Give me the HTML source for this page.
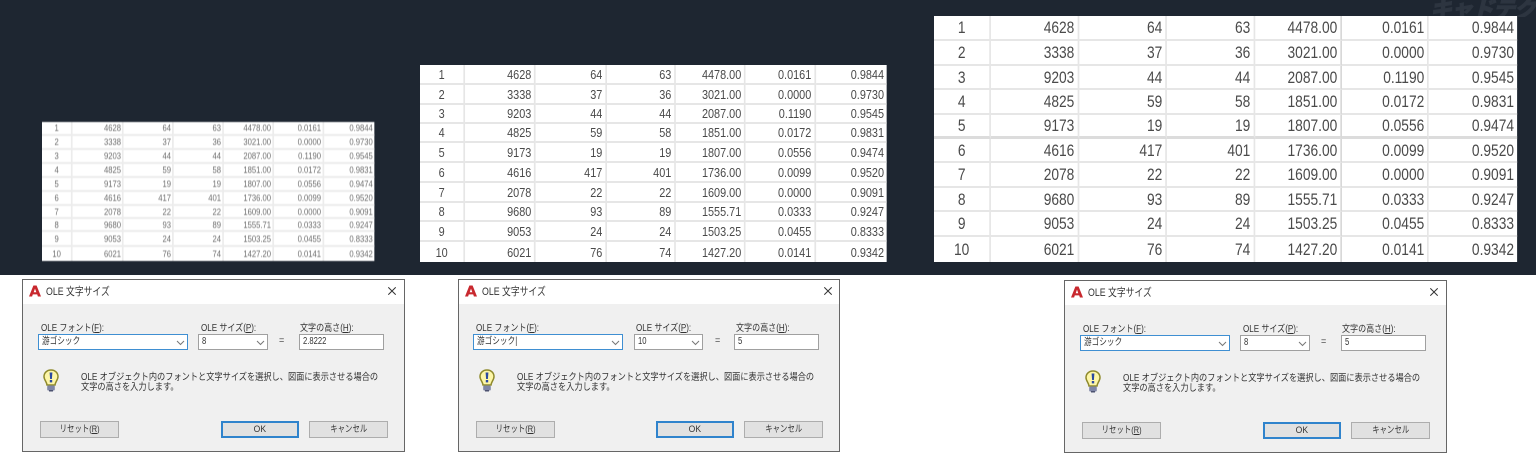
<!DOCTYPE html>
<html lang="ja">
<head>
<meta charset="utf-8">
<title>OLE 文字サイズ</title>
<style>
html,body{margin:0;padding:0;background:#fff}
body{position:relative;width:1536px;height:453px;overflow:hidden;font-family:"Liberation Sans","Noto Sans CJK JP",sans-serif}
#bg{position:absolute;left:0;top:0;width:1536px;height:275px;background:#1e2631}
#wm{position:absolute;left:1430px;top:-4px;width:106px;height:21px;overflow:hidden;color:#2d3540;font:italic 900 22px/24px "Noto Sans CJK JP",sans-serif;letter-spacing:-1px;white-space:nowrap;-webkit-text-stroke:.8px #2d3540}
table{position:absolute;border-collapse:separate;border-spacing:0;table-layout:fixed;background:#fff;color:#4a4a4a;transform-origin:0 0;transform:scaleX(.85)}
td{padding:1px 0 0;line-height:1;text-align:right;border-right:2px solid #e6e6e6;border-bottom:2px solid #e6e6e6;box-sizing:border-box;white-space:nowrap}
td:first-child{text-align:center}
td:last-child{border-right:0}
tr:last-child td{border-bottom:0}
#t1{left:42px;top:122px;width:390.6px;font-size:9px;color:#6c6c6c;filter:blur(.4px)}
#t1 td{padding-right:1.5px;border-color:#ececec}
#t2{left:420px;top:65px;width:549.41px;font-size:12.8px;filter:blur(.3px)}
#t2 td{padding-right:3.5px;padding-top:2px}
#t3{left:934px;top:16px;width:685.88px;font-size:16.2px;filter:blur(.3px)}
#t3 td{padding-right:3.5px;padding-top:2px}
#t3 tr.th td{border-bottom-width:3px;border-bottom-color:#dcdcdc}
#t3 td:nth-child(5){border-right-color:#d8d8d8}
#t1 td:first-child,#t2 td:first-child,#t3 td:first-child{padding-right:0}
.d{position:absolute;width:383px;height:173px;background:#f0f0f0;box-shadow:inset 0 0 0 1px #666;font-size:9.7px;color:#333;filter:blur(.25px)}
.d>*{position:absolute;white-space:nowrap}
.tb{left:1px;top:1px;width:381px;height:24px;background:#fff}
.ic{left:7px;top:6px;width:12px;height:12px}
.tt{left:24px;top:6px;font-size:10.6px;line-height:14px;transform:scaleX(.83);transform-origin:0 50%}
.x{left:366px;top:8px;width:8px;height:8px}
.l{top:44px;line-height:12px;transform:scaleX(.83);transform-origin:0 50%}
.f{top:55px;height:16px;box-sizing:border-box;background:#fff;border:1px solid #a0a0a0;line-height:14px;padding-left:3px}
.f.a{border-color:#3f8fd2}
.f span{display:inline-block;font-size:9.8px;transform:scaleX(.78);transform-origin:0 50%}
.f svg{position:absolute;top:5px;width:9px;height:6px}
.eq{left:257px;top:54px;line-height:14px;font-size:9px}
.bu{left:21px;top:90px;width:16px;height:23px}
.m{left:59px;top:94px;line-height:10px;font-size:9.9px;transform:scaleX(.83);transform-origin:0 0}
.b{top:142px;height:17px;box-sizing:border-box;background:#e1e1e1;border:1px solid #adadad;text-align:center;line-height:15px}
.b.k{border:2px solid #2f83cc;line-height:13px}
.b span{display:inline-block;font-size:9.5px;transform:scaleX(.78)}
.b.k span{transform:scaleX(.9)}
u{text-decoration:underline}
</style>
</head>
<body>
<div id="bg"></div>
<div id="wm">キャドテク</div>

<table id="t1">
<colgroup><col style="width:36.47px"><col style="width:60px"><col style="width:58.82px"><col style="width:58.82px"><col style="width:58.82px"><col style="width:58.82px"><col style="width:58.82px"></colgroup>
<tr style="height:14px"><td>1</td><td>4628</td><td>64</td><td>63</td><td>4478.00</td><td>0.0161</td><td>0.9844</td></tr>
<tr style="height:14px"><td>2</td><td>3338</td><td>37</td><td>36</td><td>3021.00</td><td>0.0000</td><td>0.9730</td></tr>
<tr style="height:14px"><td>3</td><td>9203</td><td>44</td><td>44</td><td>2087.00</td><td>0.1190</td><td>0.9545</td></tr>
<tr style="height:14px"><td>4</td><td>4825</td><td>59</td><td>58</td><td>1851.00</td><td>0.0172</td><td>0.9831</td></tr>
<tr style="height:14px"><td>5</td><td>9173</td><td>19</td><td>19</td><td>1807.00</td><td>0.0556</td><td>0.9474</td></tr>
<tr style="height:14px"><td>6</td><td>4616</td><td>417</td><td>401</td><td>1736.00</td><td>0.0099</td><td>0.9520</td></tr>
<tr style="height:13px"><td>7</td><td>2078</td><td>22</td><td>22</td><td>1609.00</td><td>0.0000</td><td>0.9091</td></tr>
<tr style="height:13px"><td>8</td><td>9680</td><td>93</td><td>89</td><td>1555.71</td><td>0.0333</td><td>0.9247</td></tr>
<tr style="height:15px"><td>9</td><td>9053</td><td>24</td><td>24</td><td>1503.25</td><td>0.0455</td><td>0.8333</td></tr>
<tr style="height:14px"><td>10</td><td>6021</td><td>76</td><td>74</td><td>1427.20</td><td>0.0141</td><td>0.9342</td></tr>
</table>

<table id="t2">
<colgroup><col style="width:52.94px"><col style="width:83.53px"><col style="width:83.53px"><col style="width:81.18px"><col style="width:82.35px"><col style="width:82.35px"><col style="width:83.53px"></colgroup>
<tr style="height:20px"><td>1</td><td>4628</td><td>64</td><td>63</td><td>4478.00</td><td>0.0161</td><td>0.9844</td></tr>
<tr style="height:20px"><td>2</td><td>3338</td><td>37</td><td>36</td><td>3021.00</td><td>0.0000</td><td>0.9730</td></tr>
<tr style="height:19px"><td>3</td><td>9203</td><td>44</td><td>44</td><td>2087.00</td><td>0.1190</td><td>0.9545</td></tr>
<tr style="height:19px"><td>4</td><td>4825</td><td>59</td><td>58</td><td>1851.00</td><td>0.0172</td><td>0.9831</td></tr>
<tr style="height:20px"><td>5</td><td>9173</td><td>19</td><td>19</td><td>1807.00</td><td>0.0556</td><td>0.9474</td></tr>
<tr style="height:20px"><td>6</td><td>4616</td><td>417</td><td>401</td><td>1736.00</td><td>0.0099</td><td>0.9520</td></tr>
<tr style="height:20px"><td>7</td><td>2078</td><td>22</td><td>22</td><td>1609.00</td><td>0.0000</td><td>0.9091</td></tr>
<tr style="height:19px"><td>8</td><td>9680</td><td>93</td><td>89</td><td>1555.71</td><td>0.0333</td><td>0.9247</td></tr>
<tr style="height:20px"><td>9</td><td>9053</td><td>24</td><td>24</td><td>1503.25</td><td>0.0455</td><td>0.8333</td></tr>
<tr style="height:20px"><td>10</td><td>6021</td><td>76</td><td>74</td><td>1427.20</td><td>0.0141</td><td>0.9342</td></tr>
</table>

<table id="t3">
<colgroup><col style="width:67.06px"><col style="width:103.53px"><col style="width:103.53px"><col style="width:103.53px"><col style="width:102.35px"><col style="width:102.35px"><col style="width:103.53px"></colgroup>
<tr style="height:25px"><td>1</td><td>4628</td><td>64</td><td>63</td><td>4478.00</td><td>0.0161</td><td>0.9844</td></tr>
<tr style="height:25px"><td>2</td><td>3338</td><td>37</td><td>36</td><td>3021.00</td><td>0.0000</td><td>0.9730</td></tr>
<tr style="height:24px"><td>3</td><td>9203</td><td>44</td><td>44</td><td>2087.00</td><td>0.1190</td><td>0.9545</td></tr>
<tr style="height:25px"><td>4</td><td>4825</td><td>59</td><td>58</td><td>1851.00</td><td>0.0172</td><td>0.9831</td></tr>
<tr class="th" style="height:24px"><td>5</td><td>9173</td><td>19</td><td>19</td><td>1807.00</td><td>0.0556</td><td>0.9474</td></tr>
<tr style="height:24px"><td>6</td><td>4616</td><td>417</td><td>401</td><td>1736.00</td><td>0.0099</td><td>0.9520</td></tr>
<tr style="height:25px"><td>7</td><td>2078</td><td>22</td><td>22</td><td>1609.00</td><td>0.0000</td><td>0.9091</td></tr>
<tr style="height:24px"><td>8</td><td>9680</td><td>93</td><td>89</td><td>1555.71</td><td>0.0333</td><td>0.9247</td></tr>
<tr style="height:25px"><td>9</td><td>9053</td><td>24</td><td>24</td><td>1503.25</td><td>0.0455</td><td>0.8333</td></tr>
<tr style="height:25px"><td>10</td><td>6021</td><td>76</td><td>74</td><td>1427.20</td><td>0.0141</td><td>0.9342</td></tr>
</table>

<!-- Dialog 1 -->
<div class="d" style="left:22px;top:279px">
<div class="tb"></div>
<svg class="ic" viewBox="0 0 12 12"><path d="M4.4 .5H7.6L12 11.5H8.9L8.2 9.4H3.8L3.1 11.5H0Z M6 3.6L4.7 7.2H7.3Z" fill="#c8282e" fill-rule="evenodd"/></svg>
<div class="tt">OLE 文字サイズ</div>
<svg class="x" viewBox="0 0 8 8"><path d="M.3 .3L7.7 7.7M7.7 .3L.3 7.7" stroke="#333" stroke-width="1" fill="none"/></svg>
<div class="l" style="left:19px">OLE フォント(<u>F</u>):</div>
<div class="l" style="left:179px">OLE サイズ(<u>P</u>):</div>
<div class="l" style="left:278px">文字の高さ(<u>H</u>):</div>
<div class="f a" style="left:16px;width:150px"><span>游ゴシック</span><svg style="left:137px" viewBox="0 0 9 6"><path d="M1 1L4.5 4.5L8 1" stroke="#777" fill="none"/></svg></div>
<div class="f" style="left:176px;width:70px"><span>8</span><svg style="left:57px" viewBox="0 0 9 6"><path d="M1 1L4.5 4.5L8 1" stroke="#777" fill="none"/></svg></div>
<div class="eq">=</div>
<div class="f" style="left:277px;width:85px"><span>2.8222</span></div>
<svg class="bu" viewBox="0 0 16 23"><path d="M8 1C3.800 1 1 4 1 7.600c0 3.200 2.600 5 3 8.400h8c.4-3.400 3-5.200 3-8.400C15 4 12.200 1 8 1Z" fill="#fdf6a8" stroke="#8f8a2c" stroke-width="1.500"/><path d="M6.600 3.500h2.800l-.5 6.500H7.100Z" fill="#2b4aa0"/><rect x="6.800" y="11" width="2.400" height="2.400" fill="#2b4aa0"/><rect x="4.200" y="16.500" width="7.600" height="5" rx="1" fill="#7f86a6"/><rect x="6" y="21" width="4" height="1.500" fill="#4c5270"/></svg>
<div class="m">OLE オブジェクト内のフォントと文字サイズを選択し、図面に表示させる場合の<br>文字の高さを入力します。</div>
<div class="b" style="left:18px;width:79px"><span>リセット(<u>R</u>)</span></div>
<div class="b k" style="left:199px;width:78px"><span>OK</span></div>
<div class="b" style="left:287px;width:79px"><span>キャンセル</span></div>
</div>

<!-- Dialog 2 -->
<div class="d" style="left:458px;top:279px;width:382px">
<div class="tb" style="width:380px"></div>
<svg class="ic" viewBox="0 0 12 12"><path d="M4.4 .5H7.6L12 11.5H8.9L8.2 9.4H3.8L3.1 11.5H0Z M6 3.6L4.7 7.2H7.3Z" fill="#c8282e" fill-rule="evenodd"/></svg>
<div class="tt">OLE 文字サイズ</div>
<svg class="x" viewBox="0 0 8 8"><path d="M.3 .3L7.7 7.7M7.7 .3L.3 7.7" stroke="#333" stroke-width="1" fill="none"/></svg>
<div class="l" style="left:18px">OLE フォント(<u>F</u>):</div>
<div class="l" style="left:178px">OLE サイズ(<u>P</u>):</div>
<div class="l" style="left:278px">文字の高さ(<u>H</u>):</div>
<div class="f a" style="left:15px;width:150px"><span>游ゴシック|</span><svg style="left:137px" viewBox="0 0 9 6"><path d="M1 1L4.5 4.5L8 1" stroke="#777" fill="none"/></svg></div>
<div class="f" style="left:176px;width:69px"><span>10</span><svg style="left:56px" viewBox="0 0 9 6"><path d="M1 1L4.5 4.5L8 1" stroke="#777" fill="none"/></svg></div>
<div class="eq">=</div>
<div class="f" style="left:276px;width:85px"><span>5</span></div>
<svg class="bu" viewBox="0 0 16 23"><path d="M8 1C3.800 1 1 4 1 7.600c0 3.200 2.600 5 3 8.400h8c.4-3.400 3-5.200 3-8.400C15 4 12.200 1 8 1Z" fill="#fdf6a8" stroke="#8f8a2c" stroke-width="1.500"/><path d="M6.600 3.500h2.800l-.5 6.500H7.100Z" fill="#2b4aa0"/><rect x="6.800" y="11" width="2.400" height="2.400" fill="#2b4aa0"/><rect x="4.200" y="16.500" width="7.600" height="5" rx="1" fill="#7f86a6"/><rect x="6" y="21" width="4" height="1.500" fill="#4c5270"/></svg>
<div class="m">OLE オブジェクト内のフォントと文字サイズを選択し、図面に表示させる場合の<br>文字の高さを入力します。</div>
<div class="b" style="left:18px;width:79px"><span>リセット(<u>R</u>)</span></div>
<div class="b k" style="left:198px;width:78px"><span>OK</span></div>
<div class="b" style="left:286px;width:79px"><span>キャンセル</span></div>
</div>

<!-- Dialog 3 -->
<div class="d" style="left:1064px;top:280px">
<div class="tb"></div>
<svg class="ic" viewBox="0 0 12 12"><path d="M4.4 .5H7.6L12 11.5H8.9L8.2 9.4H3.8L3.1 11.5H0Z M6 3.6L4.7 7.2H7.3Z" fill="#c8282e" fill-rule="evenodd"/></svg>
<div class="tt">OLE 文字サイズ</div>
<svg class="x" viewBox="0 0 8 8"><path d="M.3 .3L7.7 7.7M7.7 .3L.3 7.7" stroke="#333" stroke-width="1" fill="none"/></svg>
<div class="l" style="left:19px">OLE フォント(<u>F</u>):</div>
<div class="l" style="left:179px">OLE サイズ(<u>P</u>):</div>
<div class="l" style="left:278px">文字の高さ(<u>H</u>):</div>
<div class="f a" style="left:16px;width:150px"><span>游ゴシック</span><svg style="left:137px" viewBox="0 0 9 6"><path d="M1 1L4.5 4.5L8 1" stroke="#777" fill="none"/></svg></div>
<div class="f" style="left:176px;width:70px"><span>8</span><svg style="left:57px" viewBox="0 0 9 6"><path d="M1 1L4.5 4.5L8 1" stroke="#777" fill="none"/></svg></div>
<div class="eq">=</div>
<div class="f" style="left:277px;width:85px"><span>5</span></div>
<svg class="bu" viewBox="0 0 16 23"><path d="M8 1C3.800 1 1 4 1 7.600c0 3.200 2.600 5 3 8.400h8c.4-3.400 3-5.200 3-8.400C15 4 12.200 1 8 1Z" fill="#fdf6a8" stroke="#8f8a2c" stroke-width="1.500"/><path d="M6.600 3.500h2.800l-.5 6.500H7.100Z" fill="#2b4aa0"/><rect x="6.800" y="11" width="2.400" height="2.400" fill="#2b4aa0"/><rect x="4.200" y="16.500" width="7.600" height="5" rx="1" fill="#7f86a6"/><rect x="6" y="21" width="4" height="1.500" fill="#4c5270"/></svg>
<div class="m">OLE オブジェクト内のフォントと文字サイズを選択し、図面に表示させる場合の<br>文字の高さを入力します。</div>
<div class="b" style="left:18px;width:79px"><span>リセット(<u>R</u>)</span></div>
<div class="b k" style="left:199px;width:78px"><span>OK</span></div>
<div class="b" style="left:287px;width:79px"><span>キャンセル</span></div>
</div>
</body>
</html>
